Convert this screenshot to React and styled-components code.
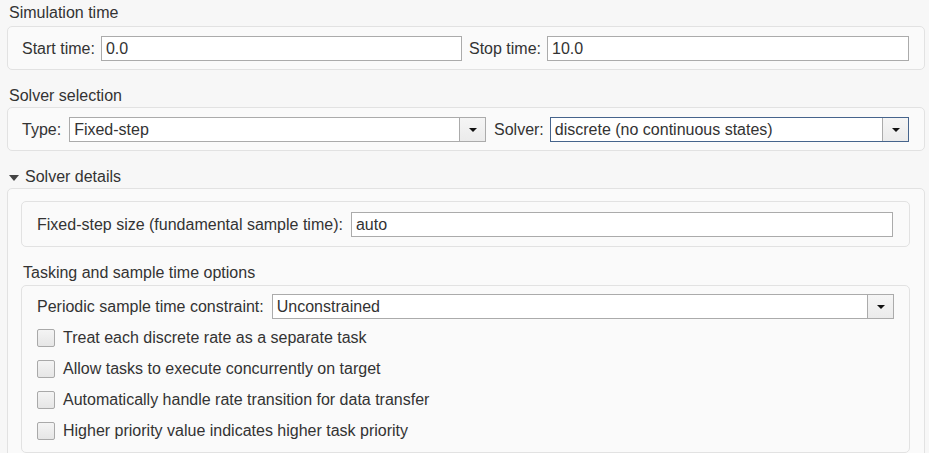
import React from 'react'
import styled, { createGlobalStyle } from 'styled-components'

const GlobalStyle = createGlobalStyle`
  html, body {
    margin: 0;
    padding: 0;
    height: 100%;
    overflow: hidden;
    background: #f7f7f7;
  }
  body {
    font-family: "Liberation Sans", Arial, sans-serif;
    font-size: 16px;
    color: #333;
  }
  * { box-sizing: border-box; }
`

const Page = styled.div`
  padding: 0 4px 0 7px;
  width: 929px;
`

const SectionTitle = styled.div`
  display: flex;
  align-items: center;
  gap: 6px;
  height: 18px;
  line-height: 18px;
  margin: ${p => p.$top || 17}px 0 ${p => p.$bottom || 2}px ${p => p.$indent || 2}px;
  white-space: nowrap;
`

const Caret = styled.span`
  width: 0;
  height: 0;
  border-left: 5px solid transparent;
  border-right: 5px solid transparent;
  border-top: 6px solid #444;
  margin-top: 1px;
`

const Panel = styled.div`
  background: #fafafa;
  border: 1px solid #e2e2e2;
  border-radius: 5px;
  padding: ${p => p.$pad || '9px 15px 8px 14px'};
`

const Row = styled.div`
  display: flex;
  align-items: center;
  gap: ${p => p.$gap || 7}px;
`

const Field = styled.div`
  display: flex;
  align-items: center;
  gap: ${p => p.$gap || 7}px;
  flex: ${p => p.$grow || 1} 1 0;
  min-width: 0;
`

const Label = styled.span`
  white-space: nowrap;
  line-height: 18px;
`

const TextBox = styled.input`
  flex: 1;
  min-width: 0;
  height: 25px;
  border: 1px solid #ababab;
  background: #fff;
  font: inherit;
  color: #333;
  padding: 0 4px;
  outline: none;
`

const SelectBox = styled.div`
  flex: 1;
  min-width: 0;
  height: 25px;
  display: flex;
  background: #fff;
  border: 1px solid ${p => (p.$focused ? '#46648c' : '#ababab')};
`

const SelectValue = styled.span`
  flex: 1;
  padding: 0 4px;
  line-height: 23px;
  white-space: nowrap;
  overflow: hidden;
`

const DropButton = styled.span`
  width: 26px;
  flex: none;
  display: flex;
  align-items: center;
  justify-content: center;
  border-left: 1px solid #ababab;
  background: linear-gradient(#f5f5f5, #ebebeb);

  &::after {
    content: '';
    width: 0;
    height: 0;
    border-left: 4px solid transparent;
    border-right: 4px solid transparent;
    border-top: 4px solid #111;
  }
`

const Options = styled.div`
  display: flex;
  flex-direction: column;
  gap: 13px;
  padding-top: 10px;
`

const CheckRow = styled.label`
  display: flex;
  align-items: center;
  gap: 8px;
  height: 18px;
  white-space: nowrap;
`

const Box = styled.span`
  width: 18px;
  height: 18px;
  flex: none;
  border: 1px solid #a9a9a9;
  border-radius: 2px;
  background: linear-gradient(#f4f4f4, #e6e6e6);
`

function Select({ value, focused }) {
  return (
    <SelectBox $focused={focused}>
      <SelectValue>{value}</SelectValue>
      <DropButton />
    </SelectBox>
  )
}

const taskOptions = [
  'Treat each discrete rate as a separate task',
  'Allow tasks to execute concurrently on target',
  'Automatically handle rate transition for data transfer',
  'Higher priority value indicates higher task priority',
]

export default function App() {
  return (
    <Page>
      <GlobalStyle />

      <SectionTitle $top={4} $bottom={4}>Simulation time</SectionTitle>
      <Panel>
        <Row>
          <Field $gap={6}>
            <Label>Start time:</Label>
            <TextBox value="0.0" readOnly />
          </Field>
          <Field $gap={6}>
            <Label>Stop time:</Label>
            <TextBox value="10.0" readOnly />
          </Field>
        </Row>
      </Panel>

      <SectionTitle>Solver selection</SectionTitle>
      <Panel>
        <Row $gap={8}>
          <Field $grow={464} $gap={8}>
            <Label>Type:</Label>
            <Select value="Fixed-step" />
          </Field>
          <Field $grow={415} $gap={6}>
            <Label>Solver:</Label>
            <Select value="discrete (no continuous states)" focused />
          </Field>
        </Row>
      </Panel>

      <SectionTitle>
        <Caret />
        Solver details
      </SectionTitle>
      <Panel $pad="12px 14px 12px 13px">
        <Panel $pad="10px 16px 9px 15px">
          <Row>
            <Field $gap={8}>
              <Label>Fixed-step size (fundamental sample time):</Label>
              <TextBox value="auto" readOnly />
            </Field>
          </Row>
        </Panel>

        <SectionTitle $top={17} $bottom={3}>Tasking and sample time options</SectionTitle>
        <Panel $pad="8px 15px 12px 15px">
          <Row>
            <Field $gap={8}>
              <Label>Periodic sample time constraint:</Label>
              <Select value="Unconstrained" />
            </Field>
          </Row>
          <Options>
            {taskOptions.map(text => (
              <CheckRow key={text}>
                <Box />
                {text}
              </CheckRow>
            ))}
          </Options>
        </Panel>
      </Panel>
    </Page>
  )
}
